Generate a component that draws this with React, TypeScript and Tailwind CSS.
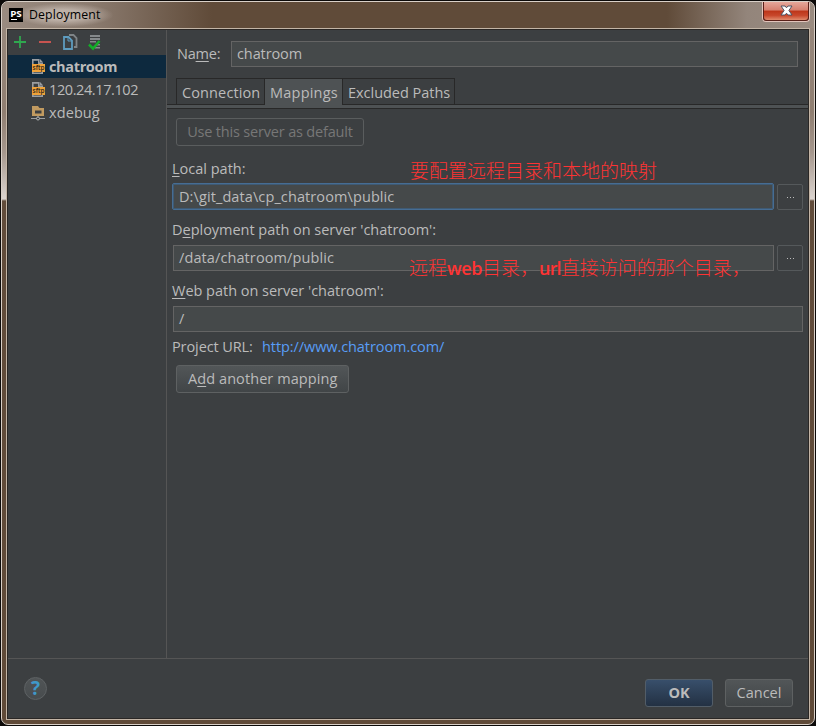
import type { ReactNode } from 'react';

export default function App() {
  return (
    <div className="h-[726px] w-[816px] overflow-hidden bg-[#0c0a09] p-px font-['Open_Sans','Noto_Sans_CJK_SC',sans-serif] text-[14.5px] text-[#bbbbbb]">
      <div className="relative flex h-[724px] w-[814px] flex-col overflow-hidden rounded-[7px] border border-[#d9d0c8] bg-[linear-gradient(to_bottom,#9a8b80_0px,#8f7e71_110px,#a5978d_150px,#dbd4cf_197px,#614c3b_199px,#5f4a38_100%)] px-1 pb-1">
        <TitleBar />
        <div className="relative flex h-[692px] w-[804px] flex-col border border-[#c3b5a6]">
          <div className="flex h-[690px] w-[802px] flex-col border border-[#2a2725] bg-[#3c3f41]">
            <div className="flex h-[628px]">
              <Sidebar />
              <MappingsPanel />
            </div>
            <Footer />
          </div>
        </div>
      </div>
    </div>
  );
}

function TitleBar() {
  return (
    <div className="-mx-1 flex h-[26px] shrink-0 items-center bg-[linear-gradient(to_right,#9a8b80_0px,#8b7b6f_90px,#604b39_210px,#604b39_665px,#93857b_745px,#9a8b80_100%)] pl-[7px]">
      <svg width="14" height="14" viewBox="0 0 14 14" className="shrink-0">
        <rect width="14" height="14" fill="#000" />
        <text x="1.2" y="8.8" fontSize="9.5" fontWeight="700" fill="#fff" fontFamily="Open Sans" textLength="11.6" lengthAdjust="spacingAndGlyphs">PS</text>
        <rect x="2" y="11" width="6" height="1" fill="#fff" />
      </svg>
      <span className="-ml-2 bg-[radial-gradient(ellipse_at_center,rgba(235,225,218,0.5)_30%,rgba(235,225,218,0)_70%)] px-[14px] text-[12.3px] leading-[24px] tracking-[0.12px] text-black">
        Deployment
      </span>
      <div className="ml-auto mr-[4px] flex h-5 w-[48px] items-center justify-center self-start rounded-b-[4px] border border-t-0 border-[#e3c4bb] bg-[#5a2018] p-px pt-0">
        <div className="flex h-full w-full items-center justify-center rounded-b-[3px] bg-[linear-gradient(to_bottom,#e5a79a_0%,#d6806f_45%,#bd3519_50%,#c8482c_75%,#e08a6c_100%)]">
          <svg width="13" height="11" viewBox="0 0 13 11" className="-mt-px">
            <path d="M1 1h4l1.500 1.800L8 1h4L8.900 5.500 12 10H8L6.500 8.200 5 10H1l3.100-4.500z" fill="#fff" stroke="#4c5362" strokeWidth="1" />
          </svg>
        </div>
      </div>
    </div>
  );
}

function Sidebar() {
  return (
    <div className="flex w-[159px] shrink-0 flex-col border-r border-[#555555]">
      <div className="h-[25px] pl-[6px] pt-1">
        <svg width="92" height="17" viewBox="0 0 92 17">
          <path d="M6 2v12M0 8h12" stroke="#2fa84f" strokeWidth="1.800" />
          <path d="M25 8h12" stroke="#c75450" strokeWidth="1.800" />
          <path d="M55 1h4.500l3 3v9H60" fill="none" stroke="#7f8487" strokeWidth="1.800" />
          <path d="M50 3h4.500l3.500 3.500V15h-8z" fill="none" stroke="#5e9cbf" strokeWidth="1.800" />
          <path d="M54 2.500V7h4" fill="none" stroke="#5e9cbf" />
          <path d="M76 1h10v2H76zM76 4h10v2H76zM76 7h6v1.500h-6zM83 10h3v1.500h-3zM81 13h5v1.500h-5z" fill="#85898b" />
          <path d="M75 10.500l4 4 6.500-7.500" fill="none" stroke="#14ad28" strokeWidth="2.600" />
        </svg>
      </div>
      <ServerRow icon={<SftpIcon />} selected>
        <span className="font-bold tracking-[-0.35px]">chatroom</span>
      </ServerRow>
      <ServerRow icon={<SftpIcon />}>
        <span className="tracking-[-0.4px]">120.24.17.102</span>
      </ServerRow>
      <ServerRow icon={<FolderIcon />}>
        <span className="tracking-[0.1px]">xdebug</span>
      </ServerRow>
    </div>
  );
}

function ServerRow({ icon, selected, children }: { icon: ReactNode; selected?: boolean; children: ReactNode }) {
  return (
    <div className={`flex h-[23px] items-center gap-1 pl-[23px] leading-[23px] ${selected ? 'bg-[#0d293e]' : ''}`}>
      {icon}
      {children}
    </div>
  );
}

function SftpIcon() {
  return (
    <svg width="14" height="17" viewBox="0 0 14 17" className="shrink-0 overflow-visible">
      <path d="M1.800 15.200V1.900h5.700M7.800 1v4.200h4M11.200 4.500v10.700H1" fill="none" stroke="#9a9da0" strokeWidth="1.600" />
      <path d="M9 1l3 3.200H9z" fill="#9a9da0" />
      <rect x="1" y="6" width="13" height="8" fill="#eea23a" />
      <text x="1.500" y="12.200" fontSize="7" fontWeight="600" fill="#33291b" fontFamily="Open Sans" textLength="12" lengthAdjust="spacingAndGlyphs">sftp</text>
    </svg>
  );
}

function FolderIcon() {
  return (
    <svg width="14" height="17" viewBox="0 0 14 17" className="shrink-0">
      <path d="M1 2h6l1.500 2H13v8H1z" fill="#c09a60" />
      <path d="M4 6.500h6.500v3H4z" fill="#3c3f41" />
      <path d="M0 14.500h14M7 12v2" stroke="#9a9da0" />
      <circle cx="7" cy="14.500" r="1.500" fill="#3c3f41" stroke="#b0b3b5" />
    </svg>
  );
}

function MappingsPanel() {
  return (
    <div className="relative flex w-[641px] flex-col">
      <div className="flex h-[48px] items-start pl-[10px] pt-[11px] leading-[26px]">
        <span className="w-[54px] tracking-[-0.2px]">Na<Key>m</Key>e:</span>
        <div className="h-[26px] w-[567px] border border-[#646464] bg-[#45494a] pl-[5px] leading-[24px] tracking-[-0.1px]">chatroom</div>
      </div>
      <div className="relative z-10 flex h-[26px] pl-[9px] leading-[27px]">
        <div className="w-[89px] border border-b-0 border-[#282828] pl-[5px] tracking-[0.12px]">Connection</div>
        <div className="h-[27px] w-[77px] border-t border-[#282828] bg-[#4e5254] pl-[5px] tracking-[0.22px]">Mappings</div>
        <div className="w-[113px] border border-b-0 border-[#282828] pl-[5px] tracking-[-0.03px]">Excluded Paths</div>
      </div>
      <div className="h-[5px] border-y border-[#282828] bg-[#4e5254]" />

      <div className="flex flex-col pl-[5px]">
        <div className="ml-1 mt-[9px] h-7 w-[188px] rounded-[3px] border border-[#5a5d5e] text-center leading-[26px] tracking-[-0.18px] text-[#777777]">
          Use this server as default
        </div>
        <div className="mt-[9px] h-[28px] leading-[27px]"><Key>L</Key>ocal path:</div>
        <div className="flex gap-[3px]">
          <div className="h-[27px] w-[602px] rounded-[2px] border border-[#466d94] bg-[#45494a] pl-[6px] leading-[25px] tracking-[0.1px] shadow-[inset_0_0_0_1px_#3f5a73]">
            D:\git_data\cp_chatroom\public
          </div>
          <BrowseButton />
        </div>
        <div className="mt-[6px] h-[28px] leading-[28px] tracking-[-0.02px]">D<Key>e</Key>ployment path on server 'chatroom':</div>
        <div className="flex gap-[3px] pl-px">
          <div className="mt-px h-[26px] w-[601px] border border-[#646464] bg-[#45494a] pl-[5px] leading-[24px] tracking-[0.1px]">/data/chatroom/public</div>
          <BrowseButton />
        </div>
        <div className="mt-[6px] h-[29px] leading-[28px] tracking-[-0.02px]"><Key>W</Key>eb path on server 'chatroom':</div>
        <div className="ml-px h-[26px] w-[630px] border border-[#646464] bg-[#45494a] pl-[5px] leading-[24px]">/</div>
        <div className="flex h-[33px] leading-[30px]">
          <span className="w-[90px] tracking-[-0.1px]">Project URL:</span>
          <span className="tracking-[-0.08px] text-[#589df6]">http://www.chatroom.com/</span>
        </div>
        <div className="ml-1 h-7 w-[173px] rounded-[3px] border border-[#5e6162] bg-linear-to-b from-[#525658] to-[#414547] pl-[11px] leading-[26px] tracking-[0.08px]">
          A<Key>d</Key>d another mapping
        </div>
      </div>

      {/* red notes written over the form */}
      <Note className="left-[243px] top-[128px]">要配置远程目录和本地的映射</Note>
      <Note className="left-[242px] top-[225px]">
        远程<b className="font-['Open_Sans'] text-[18px] font-semibold tracking-[-0.4px]">web</b>目录，<b className="font-['Open_Sans'] text-[18px] font-semibold tracking-[-0.9px]">url</b>直接访问的那个目录，
      </Note>
    </div>
  );
}

function Key({ children }: { children: string }) {
  return <span className="underline decoration-1 underline-offset-2">{children}</span>;
}

function BrowseButton() {
  return (
    <div className="mt-px flex h-[26px] w-[26px] items-center justify-center gap-[2px] rounded-[2px] border border-[#55595b]">
      <i className="size-px bg-[#bbbbbb]" />
      <i className="size-px bg-[#bbbbbb]" />
      <i className="size-px bg-[#bbbbbb]" />
    </div>
  );
}

function Note({ className, children }: { className: string; children: ReactNode }) {
  return (
    <div className={`absolute whitespace-nowrap font-['Noto_Sans_CJK_SC',sans-serif] text-[19px] font-light leading-[24px] text-[#ff3333] ${className}`}>
      {children}
    </div>
  );
}

function Footer() {
  return (
    <div className="flex h-[60px] items-start border-t border-[#555555] pl-4 pr-[15px]">
      <div className="mt-[18px] flex size-[23px] items-center justify-center rounded-full border border-[#5e6264] bg-linear-to-b from-[#505456] to-[#484c4e] pb-px text-[19px] font-bold leading-none text-[#3f98c9]">
        ?
      </div>
      <div className="ml-auto mt-5 flex gap-3 text-center leading-[26px]">
        <div className="h-7 w-[68px] rounded-[3px] border border-[#525d68] bg-linear-to-b from-[#384f6b] to-[#233143] font-bold">OK</div>
        <div className="h-7 w-[68px] rounded-[3px] border border-[#5e6162] bg-linear-to-b from-[#525658] to-[#414547]">Cancel</div>
      </div>
    </div>
  );
}
